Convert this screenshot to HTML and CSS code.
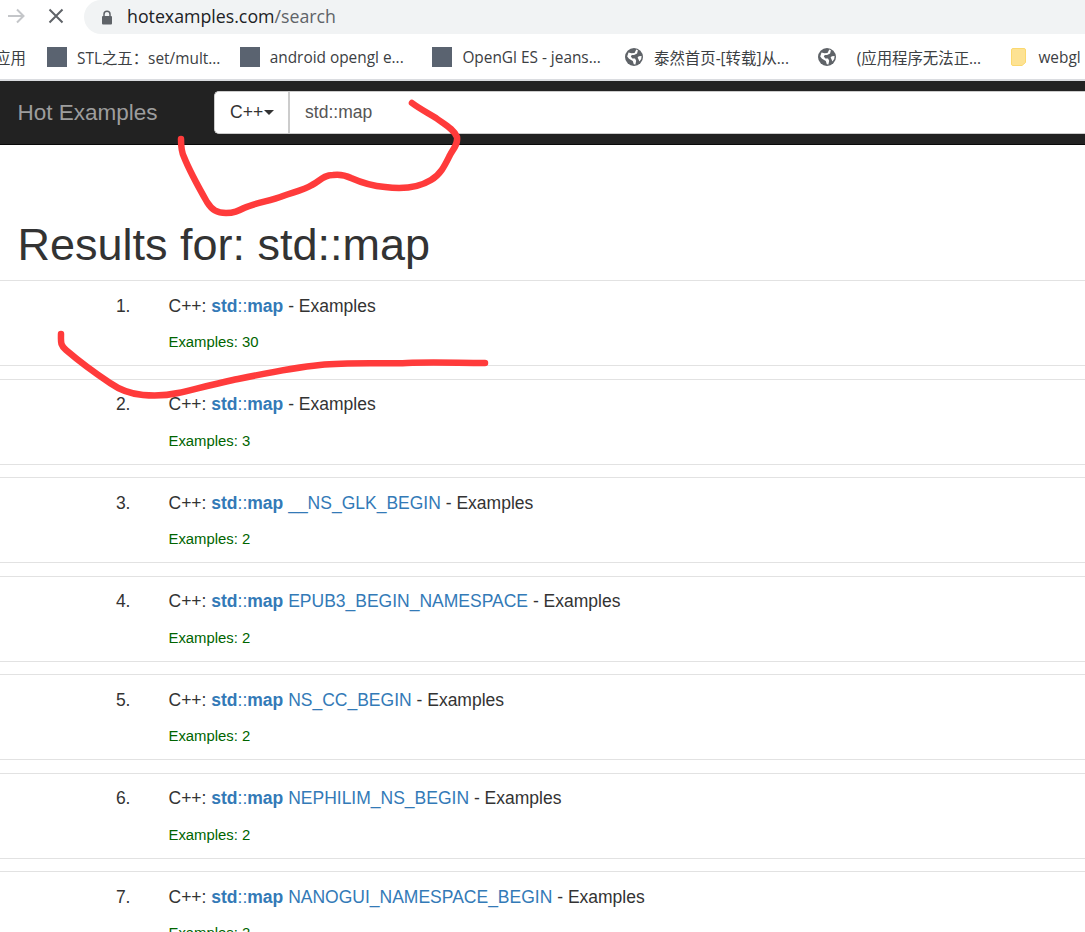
FILE: index.html
```html
<!DOCTYPE html>
<html lang="en">
<head>
  <meta charset="UTF-8">
  <title>Results for: std::map</title>
  <link rel="stylesheet" href="styles.css">
</head>
<body>
<div class="page">

  <div class="toolbar">
    <svg class="nav-icon" width="20" height="20" viewBox="0 0 20 20"><path d="M2 10h15M11 3.5l6.5 6.5-6.5 6.5" fill="none" stroke="#c4c6c9" stroke-width="2"/></svg>
    <svg class="nav-icon stop" width="20" height="20" viewBox="0 0 20 20"><path d="M3.5 3.5l13 13M16.5 3.5l-13 13" fill="none" stroke="#5f6368" stroke-width="2"/></svg>
    <div class="omnibox">
      <svg width="12" height="15" viewBox="0 0 12 15"><path d="M3 6V4.2a3 3 0 0 1 6 0V6" fill="none" stroke="#5f6368" stroke-width="1.5"/><rect x="1" y="6" width="10" height="8.5" rx="1" fill="#5f6368"/></svg>
      <span class="url">hotexamples.com<span class="url-path">/search</span></span>
    </div>
  </div>

  <div class="bookmarks">
    <span class="apps">应用</span>
    <a class="bookmark"><i class="favicon"></i>STL之五：set/mult...</a>
    <a class="bookmark"><i class="favicon"></i>android opengl e...</a>
    <a class="bookmark"><i class="favicon"></i>OpenGl ES - jeans...</a>
    <a class="bookmark">
      <svg class="globe" width="18" height="18" viewBox="0 0 18 18"><circle cx="9" cy="9" r="9" fill="#5f6368"/><path d="M3.5 4.5l3 .8 3-.3 1.8-3.6 1.6.8-.8 3.4-3 1.4H6.8L5.8 8.6l1.6 2h2.6l1.2 2.2-.8 3.6-1.6-.1-1-3.2L4 10.8 2.2 8.6z" fill="#fff"/><path d="M16.6 8l-2.8.2-1.2 1.4 1 1.8.8 2 1.8-2.4z" fill="#fff"/></svg>
      泰然首页-[转载]从...
    </a>
    <a class="bookmark wide">
      <svg class="globe" width="18" height="18" viewBox="0 0 18 18"><circle cx="9" cy="9" r="9" fill="#5f6368"/><path d="M3.5 4.5l3 .8 3-.3 1.8-3.6 1.6.8-.8 3.4-3 1.4H6.8L5.8 8.6l1.6 2h2.6l1.2 2.2-.8 3.6-1.6-.1-1-3.2L4 10.8 2.2 8.6z" fill="#fff"/><path d="M16.6 8l-2.8.2-1.2 1.4 1 1.8.8 2 1.8-2.4z" fill="#fff"/></svg>
      (应用程序无法正...
    </a>
    <a class="bookmark">
      <svg class="folder" width="16" height="18" viewBox="0 0 16 18"><path d="M2 .5h11a1.5 1.5 0 0 1 1.5 1.5v12.5L11 17.5H2A1.5 1.5 0 0 1 .5 16V2A1.5 1.5 0 0 1 2 .5z" fill="#fde293" stroke="#fbd86f"/></svg>
      webgl
    </a>
  </div>

  <nav class="navbar">
    <a class="brand">Hot Examples</a>
    <div class="search">
      <button class="lang">C++<i class="caret"></i></button>
      <div class="query">std::map</div>
    </div>
  </nav>

  <h1 class="heading">Results for: std::map</h1>

  <ol class="results">
    <li class="result">
      <span class="num">1.</span>
      <div>
        <div class="title">C++: <a class="link"><b>std</b>::<b>map</b></a> - Examples</div>
        <div class="count">Examples: 30</div>
      </div>
    </li>
    <li class="result">
      <span class="num">2.</span>
      <div>
        <div class="title">C++: <a class="link"><b>std</b>::<b>map</b></a> - Examples</div>
        <div class="count">Examples: 3</div>
      </div>
    </li>
    <li class="result">
      <span class="num">3.</span>
      <div>
        <div class="title">C++: <a class="link"><b>std</b>::<b>map</b> __NS_GLK_BEGIN</a> - Examples</div>
        <div class="count">Examples: 2</div>
      </div>
    </li>
    <li class="result">
      <span class="num">4.</span>
      <div>
        <div class="title">C++: <a class="link"><b>std</b>::<b>map</b> EPUB3_BEGIN_NAMESPACE</a> - Examples</div>
        <div class="count">Examples: 2</div>
      </div>
    </li>
    <li class="result">
      <span class="num">5.</span>
      <div>
        <div class="title">C++: <a class="link"><b>std</b>::<b>map</b> NS_CC_BEGIN</a> - Examples</div>
        <div class="count">Examples: 2</div>
      </div>
    </li>
    <li class="result">
      <span class="num">6.</span>
      <div>
        <div class="title">C++: <a class="link"><b>std</b>::<b>map</b> NEPHILIM_NS_BEGIN</a> - Examples</div>
        <div class="count">Examples: 2</div>
      </div>
    </li>
    <li class="result">
      <span class="num">7.</span>
      <div>
        <div class="title">C++: <a class="link"><b>std</b>::<b>map</b> NANOGUI_NAMESPACE_BEGIN</a> - Examples</div>
        <div class="count">Examples: 2</div>
      </div>
    </li>
  </ol>

  <!-- red marker scribbles drawn over the screenshot -->
  <svg class="scribbles" width="1085" height="932" viewBox="0 0 1085 932">
    <path d="M181 139C181 146 181 151 184 157C190 172 199 188 207 202C212 210 217 213 226 213C234 213 238 211 244 208C255 203 270 201 283 196C294 192 304 190 312 185C320 181 323 175 333 175C341 174 345 175 351 178C360 182 372 186 385 187C400 189 418 188 431 180C441 174 445 165 450 155C454 148 458 144 457 137C454 129 444 124 436 118C428 113 420 109 412 103"/>
    <path d="M61 334C61 342 60 345 66 350C80 362 95 373 110 383C120 390 131 394 143 395C155 396 165 396 178 393C195 389 215 384 233 380C262 374 290 368 320 365C350 362 380 364 407 363C432 362 458 363 485 363"/>
  </svg>

</div>
</body>
</html>
```

FILE: styles.css
```css
* {
  box-sizing: border-box;
}

html, body {
  margin: 0;
  height: 932px;
  overflow: hidden;
  background: #fff;
}

.page {
  position: relative;
  height: 932px;
  overflow: hidden;
  font-family: "Liberation Sans", Arial, sans-serif;
  color: #333;
}

/* browser chrome */
.toolbar {
  display: flex;
  align-items: center;
  height: 34px;
  padding-left: 6px;
}

.nav-icon {
  flex: none;
  margin-bottom: 2px;
}

.stop {
  margin-left: 20px;
}

.omnibox {
  display: flex;
  align-items: center;
  flex: 1;
  height: 34px;
  margin-left: 18px;
  padding-left: 17px;
  background: #f1f3f4;
  border-radius: 17px 0 0 17px;
}

.url {
  margin-left: 14px;
  padding-bottom: 3px;
  font-family: "Open Sans", "Noto Sans", sans-serif;
  font-size: 17.75px;
  color: #202124;
  white-space: nowrap;
}

.url-path {
  color: #5f6368;
}

.bookmarks {
  display: flex;
  align-items: center;
  height: 47px;
  padding-top: 1px;
  border-bottom: 2px solid #dadce0;
  font-family: "Open Sans", "Noto Sans CJK SC", sans-serif;
  font-size: 15.4px;
  color: #3c4043;
  white-space: nowrap;
  overflow: hidden;
}

.apps {
  flex: 0 0 52px;
  margin-left: -5px;
  font-family: "Noto Sans CJK SC", sans-serif;
}

.bookmark {
  display: flex;
  align-items: center;
  flex: 0 0 192.7px;
  gap: 10px;
}

.bookmark.wide {
  gap: 20px;
}

.favicon {
  width: 20px;
  height: 20px;
  background: #5a6370;
}

.globe {
  margin-right: 1px;
}

.folder {
  margin: 0 1px;
}

/* site navbar */
.navbar {
  display: flex;
  align-items: center;
  height: 64px;
  padding-left: 17.5px;
  background: #222;
  border-bottom: 1px solid #080808;
}

.brand {
  font-size: 22.5px;
  color: #9d9d9d;
}

.search {
  display: flex;
  flex: 1;
  height: 43px;
  margin-left: 56.5px;
  background: #fff;
  border: 1px solid #ccc;
  border-right: 0;
  border-radius: 5px 0 0 5px;
  font-size: 17.5px;
}

.lang {
  display: flex;
  align-items: center;
  width: 75px;
  padding: 0 0 0 15px;
  background: #fff;
  border: 0;
  border-right: 2px solid #ccc;
  border-radius: 5px 0 0 5px;
  font-family: inherit;
  font-size: inherit;
  color: #333;
}

.caret {
  margin-left: 1px;
  border-top: 5px solid #333;
  border-left: 5px solid transparent;
  border-right: 5px solid transparent;
}

.query {
  padding-left: 15px;
  line-height: 41px;
  color: #555;
}

/* results */
.heading {
  margin: 73px 0 0;
  padding-left: 17.5px;
  font-size: 45px;
  font-weight: 400;
  line-height: 53px;
}

.results {
  margin: 9px 0 0;
  padding: 0;
  list-style: none;
  font-size: 17.5px;
}

.result {
  display: flex;
  height: 86px;
  margin-bottom: 12.5px;
  padding-top: 14.5px;
  border-top: 1px solid #e2e2e2;
  border-bottom: 1px solid #e2e2e2;
}

.num {
  flex: 0 0 130.5px;
  line-height: 21px;
  text-align: right;
  margin-right: 38px;
}

.title {
  line-height: 21px;
}

.link {
  color: #337ab7;
}

.count {
  margin-top: 16.5px;
  font-size: 14.875px;
  line-height: 18px;
  color: #006400;
}

/* annotations */
.scribbles {
  position: absolute;
  top: 0;
  left: 0;
  pointer-events: none;
}

.scribbles path {
  fill: none;
  stroke: #ff3b3b;
  stroke-width: 6.5;
  stroke-linecap: round;
  stroke-linejoin: round;
}
```
